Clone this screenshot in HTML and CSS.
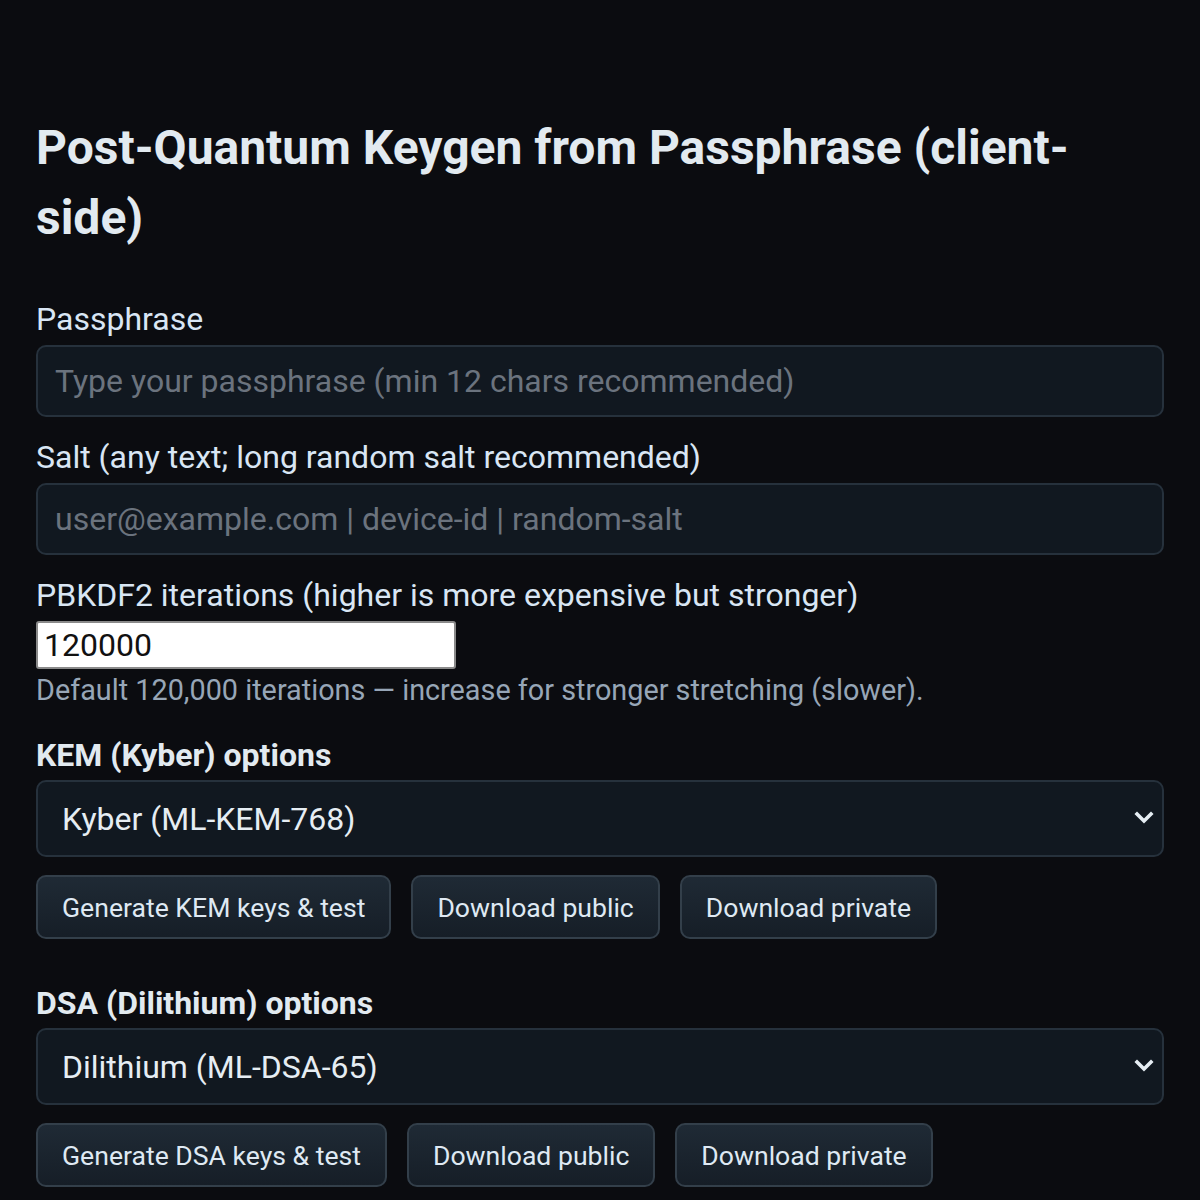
FILE: index.html
```html
<!DOCTYPE html>
<html lang="en">
<head>
<meta charset="utf-8">
<title>Post-Quantum Keygen from Passphrase</title>
<link rel="stylesheet" href="styles.css">
</head>
<body>
<main class="wrap">
  <h1 class="title">Post-Quantum Keygen from Passphrase (client-side)</h1>

  <label class="label" for="pass">Passphrase</label>
  <input class="field" id="pass" type="password" placeholder="Type your passphrase (min 12 chars recommended)">

  <label class="label label-gap" for="salt">Salt (any text; long random salt recommended)</label>
  <input class="field" id="salt" type="text" placeholder="user@example.com | device-id | random-salt">

  <label class="label label-gap" for="iter">PBKDF2 iterations (higher is more expensive but stronger)</label>
  <input class="num" id="iter" type="text" inputmode="numeric" value="120000">
  <div class="help">Default 120,000 iterations — increase for stronger stretching (slower).</div>

  <section class="section section-first">
    <h2 class="heading">KEM (Kyber) options</h2>
    <div class="select-wrap">
      <select class="select">
        <option>Kyber (ML-KEM-768)</option>
        <option>Kyber (ML-KEM-512)</option>
        <option>Kyber (ML-KEM-1024)</option>
      </select>
      <svg class="chev" width="20" height="14" viewBox="0 0 20 14" aria-hidden="true"><path d="M3 3 L10 10 L17 3" fill="none" stroke="#e6edf3" stroke-width="3.6" stroke-linecap="square"/></svg>
    </div>
    <div class="btn-row">
      <button class="btn" type="button">Generate KEM keys &amp; test</button>
      <button class="btn" type="button">Download public</button>
      <button class="btn" type="button">Download private</button>
    </div>
  </section>

  <section class="section">
    <h2 class="heading">DSA (Dilithium) options</h2>
    <div class="select-wrap">
      <select class="select">
        <option>Dilithium (ML-DSA-65)</option>
        <option>Dilithium (ML-DSA-44)</option>
        <option>Dilithium (ML-DSA-87)</option>
      </select>
      <svg class="chev" width="20" height="14" viewBox="0 0 20 14" aria-hidden="true"><path d="M3 3 L10 10 L17 3" fill="none" stroke="#e6edf3" stroke-width="3.6" stroke-linecap="square"/></svg>
    </div>
    <div class="btn-row">
      <button class="btn" type="button">Generate DSA keys &amp; test</button>
      <button class="btn" type="button">Download public</button>
      <button class="btn" type="button">Download private</button>
    </div>
  </section>
</main>
</body>
</html>
```

FILE: styles.css
```css
html, body {
  margin: 0;
  padding: 0;
  background: #0b0c10;
}

body {
  font-family: Roboto, "Liberation Sans", sans-serif;
  color: #dfe8f1;
}

.wrap {
  padding: 113px 36px 40px 36px;
  display: flex;
  flex-direction: column;
  align-items: stretch;
}

.title {
  margin: 0 0 48px 0;
  font-size: 48px;
  font-weight: 700;
  line-height: 70px;
  color: #e2eaf0;
}

.label {
  display: block;
  font-size: 32px;
  line-height: 36px;
  margin: 0 0 8px 0;
  color: #d9e6f4;
}

.label-gap {
  margin-top: 22px;
}

.field {
  box-sizing: border-box;
  width: 100%;
  height: 72px;
  margin: 0;
  padding: 0 17px;
  font-family: Roboto, "Liberation Sans", sans-serif;
  font-size: 32px;
  color: #e6edf3;
  background: #111820;
  border: 2px solid #26313c;
  border-radius: 10px;
  outline: none;
}

.field::placeholder {
  color: #6b737e;
}

.num {
  box-sizing: border-box;
  align-self: flex-start;
  width: 420px;
  height: 48px;
  margin: 0;
  padding: 0 6px;
  font-family: Roboto, "Liberation Sans", sans-serif;
  font-size: 32px;
  color: #111;
  background: #fff;
  border: 2px solid #8a8a8a;
  border-radius: 3px;
  outline: none;
}

.help {
  margin-top: 5px;
  font-size: 28.8px;
  line-height: 32px;
  color: #97a6b7;
}

.section {
  margin-top: 46px;
}

.section-first {
  margin-top: 31px;
}

.heading {
  margin: 0 0 7px 0;
  font-size: 32px;
  font-weight: 700;
  line-height: 36px;
  color: #e2eaf0;
}

.select-wrap {
  position: relative;
}

.select {
  -webkit-appearance: none;
  appearance: none;
  box-sizing: border-box;
  width: 100%;
  height: 77px;
  margin: 0;
  padding: 0 60px 0 24px;
  font-family: Roboto, "Liberation Sans", sans-serif;
  font-size: 32px;
  color: #e6edf3;
  background: #111820;
  border: 2px solid #26313c;
  border-radius: 10px;
  outline: none;
}

.chev {
  position: absolute;
  right: 10px;
  top: 31px;
  pointer-events: none;
}

.btn-row {
  display: flex;
  gap: 20px;
  margin-top: 18px;
}

.btn {
  box-sizing: border-box;
  height: 64px;
  padding: 0 24px;
  font-family: Roboto, "Liberation Sans", sans-serif;
  font-size: 26.6px;
  color: #dfe9f3;
  background: linear-gradient(#1f2a35, #161e27);
  border: 2px solid #333f4a;
  border-radius: 10px;
  cursor: pointer;
}
```
